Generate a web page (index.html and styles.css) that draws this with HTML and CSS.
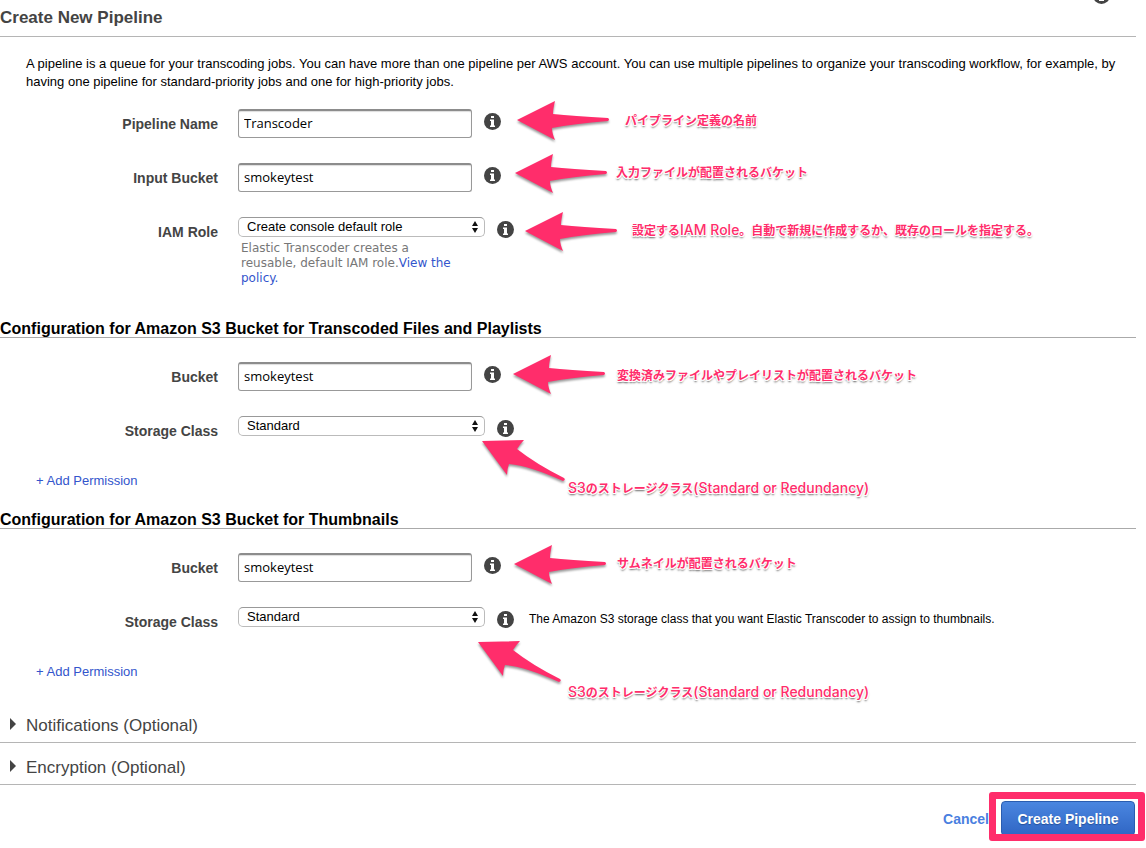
FILE: index.html
```
<!DOCTYPE html>
<html lang="en">
<head>
<meta charset="utf-8">
<title>Create New Pipeline</title>
<link rel="stylesheet" href="styles.css">
</head>
<body>
<svg class="defs" aria-hidden="true">
  <symbol id="info" viewBox="0 0 17 17">
    <circle cx="8.500" cy="8.500" r="8.500" fill="#444"/>
    <path fill="#fff" d="M7 3h3v2H7zM6 6.500h4v6h1v1.500H6v-1.500h1V8H6z"/>
  </symbol>
  <symbol id="updown" viewBox="0 0 6 12">
    <path fill="#111" d="M3 0l3 5H0zM3 12L0 7h6z"/>
  </symbol>
  <symbol id="arrow" viewBox="0 0 94 42">
    <path fill="#ff2d6b" d="M0 20L38 1Q36 9 36 14Q56 16 91 18Q93 19.500 91 21Q56 24 35 28Q35 33 38 40Z"/>
  </symbol>
  <symbol id="arrow-up" viewBox="0 0 84 42">
    <path fill="#ff2d6b" d="M0 1L42 0Q38 4 35 9Q54 24 82 38Q84 40 81 41Q48 26 27 24Q25 29 25 35Z"/>
  </symbol>
</svg>
<main class="page">
  <header class="page-head">
    <h1>Create New Pipeline</h1>
    <svg class="info head-info" role="img" aria-label="Info"><use href="#info"/></svg>
  </header>
  <p class="intro">A pipeline is a queue for your transcoding jobs. You can have more than one pipeline per AWS account. You can use multiple pipelines to organize your transcoding workflow, for example, by having one pipeline for standard-priority jobs and one for high-priority jobs.</p>

  <form>
    <div class="rows rows-main">
      <div class="row">
        <label for="name">Pipeline Name</label>
        <input class="text" id="name" type="text" value="Transcoder">
        <svg class="info" role="img" aria-label="Info"><use href="#info"/></svg>
      </div>
      <div class="row">
        <label for="input-bucket">Input Bucket</label>
        <input class="text" id="input-bucket" type="text" value="smokeytest">
        <svg class="info" role="img" aria-label="Info"><use href="#info"/></svg>
      </div>
      <div class="row">
        <label for="role">IAM Role</label>
        <div class="choice">
          <div class="select">
            <select id="role"><option>Create console default role</option></select>
            <svg class="updown" aria-hidden="true"><use href="#updown"/></svg>
          </div>
          <p class="help">Elastic Transcoder creates a reusable, default IAM role.<a href="#">View the policy.</a></p>
        </div>
        <svg class="info" role="img" aria-label="Info"><use href="#info"/></svg>
      </div>
    </div>

    <section class="config">
      <h2>Configuration for Amazon S3 Bucket for Transcoded Files and Playlists</h2>
      <div class="rows">
        <div class="row">
          <label for="files-bucket">Bucket</label>
          <input class="text" id="files-bucket" type="text" value="smokeytest">
          <svg class="info" role="img" aria-label="Info"><use href="#info"/></svg>
        </div>
        <div class="row">
          <label for="files-class">Storage Class</label>
          <div class="select">
            <select id="files-class"><option>Standard</option></select>
            <svg class="updown" aria-hidden="true"><use href="#updown"/></svg>
          </div>
          <svg class="info" role="img" aria-label="Info"><use href="#info"/></svg>
        </div>
      </div>
      <a class="add" href="#">+ Add Permission</a>
    </section>

    <section class="config">
      <h2>Configuration for Amazon S3 Bucket for Thumbnails</h2>
      <div class="rows">
        <div class="row">
          <label for="thumbs-bucket">Bucket</label>
          <input class="text" id="thumbs-bucket" type="text" value="smokeytest">
          <svg class="info" role="img" aria-label="Info"><use href="#info"/></svg>
        </div>
        <div class="row">
          <label for="thumbs-class">Storage Class</label>
          <div class="select">
            <select id="thumbs-class"><option>Standard</option></select>
            <svg class="updown" aria-hidden="true"><use href="#updown"/></svg>
          </div>
          <svg class="info" role="img" aria-label="Info"><use href="#info"/></svg>
          <p class="hint">The Amazon S3 storage class that you want Elastic Transcoder to assign to thumbnails.</p>
        </div>
      </div>
      <a class="add" href="#">+ Add Permission</a>
    </section>

    <details class="more">
      <summary><svg class="caret" viewBox="0 0 6 12" aria-hidden="true"><path fill="#444" d="M0 0l6 6-6 6z"/></svg>Notifications (Optional)</summary>
    </details>
    <details class="more">
      <summary><svg class="caret" viewBox="0 0 6 12" aria-hidden="true"><path fill="#444" d="M0 0l6 6-6 6z"/></svg>Encryption (Optional)</summary>
    </details>

    <footer class="actions">
      <a class="cancel" href="#">Cancel</a>
      <div class="marked"><button class="create" type="submit">Create Pipeline</button></div>
    </footer>
  </form>

  <div class="notes" lang="ja">
    <svg class="arrow a-name" aria-hidden="true"><use href="#arrow"/></svg>
    <span class="note n-name">パイプライン定義の名前</span>
    <svg class="arrow a-input" aria-hidden="true"><use href="#arrow"/></svg>
    <span class="note n-input">入力ファイルが配置されるバケット</span>
    <svg class="arrow a-role" aria-hidden="true"><use href="#arrow"/></svg>
    <span class="note n-role">設定する<span class="latin">IAM Role</span>。自動で新規に作成するか、既存のロールを指定する。</span>
    <svg class="arrow a-files" aria-hidden="true"><use href="#arrow"/></svg>
    <span class="note n-files">変換済みファイルやプレイリストが配置されるバケット</span>
    <svg class="arrow-up a-files-class" aria-hidden="true"><use href="#arrow-up"/></svg>
    <span class="note n-files-class"><span class="latin">S3</span>のストレージクラス<span class="latin">(Standard or Redundancy)</span></span>
    <svg class="arrow a-thumbs" aria-hidden="true"><use href="#arrow"/></svg>
    <span class="note n-thumbs">サムネイルが配置されるバケット</span>
    <svg class="arrow-up a-thumbs-class" aria-hidden="true"><use href="#arrow-up"/></svg>
    <span class="note n-thumbs-class"><span class="latin">S3</span>のストレージクラス<span class="latin">(Standard or Redundancy)</span></span>
  </div>
</main>
</body>
</html>
```
FILE: styles.css
```
* { box-sizing: border-box; }
body {
  margin: 0;
  background: #fff;
  color: #000;
  font: 13px/18px "Liberation Sans", Arial, sans-serif;
}
h1, h2, p { margin: 0; }
a { color: #3355cc; text-decoration: none; }
.defs { position: absolute; width: 0; height: 0; }
.page { position: relative; padding-right: 10px; overflow: clip; }

.page-head { position: relative; padding: 9px 0 9px; border-bottom: 1px solid #b5b5b5; }
.page-head h1 { color: #444; font-size: 17px; line-height: 18px; }
.info { flex: none; width: 17px; height: 17px; margin: 4px 0 0 12px; }
.head-info { position: absolute; top: -17px; right: 26px; }

.intro { padding: 18px 10px 0 26px; }

.rows { display: flex; flex-direction: column; gap: 25px; padding-top: 24px; }
.rows-main { padding: 18px 0 34px; }
.row { display: flex; align-items: flex-start; min-height: 29px; }
.row label {
  flex: none;
  width: 218px;
  margin-right: 20px;
  padding-top: 2px;
  color: #444;
  font-size: 14px;
  font-weight: bold;
  line-height: 27px;
  text-align: right;
}
.text {
  width: 234px;
  height: 29px;
  padding: 0 5px 2px;
  border: 1px solid #999;
  border-top: 2px solid #8c8c8c;
  border-radius: 3px;
  background: #fff;
  box-shadow: inset 0 1px 1px #ddd;
  color: #000;
  font: 13px "Open Sans", sans-serif;
}
.select { position: relative; width: 247px; height: 20px; }
.select select {
  appearance: none;
  display: block;
  width: 100%;
  height: 20px;
  padding: 0 20px 2px 8px;
  border: 1px solid #bbb;
  border-top-color: #999;
  border-radius: 5px;
  background: #fff;
  color: #000;
  font: 13px "Liberation Sans", Arial, sans-serif;
}
.updown { position: absolute; top: 4px; right: 7px; width: 6px; height: 12px; pointer-events: none; }
.choice { width: 247px; }
.help {
  padding: 4px 20px 0 3px;
  color: #777;
  font: 12px/15px "DejaVu Sans", Verdana, sans-serif;
}
.hint { padding: 3px 0 0 15px; font-size: 12px; }

.config h2 { padding-top: 1px; border-bottom: 1px solid #aaa; font-size: 16px; line-height: 17px; }
.rows-main { padding-bottom: 33px; }
.add { display: inline-block; margin: 27px 0 20px 36px; }

.more { border-bottom: 1px solid #b5b5b5; }
.more summary {
  display: flex;
  align-items: flex-start;
  gap: 10px;
  padding: 14px 0 5px 10px;
  color: #444;
  font-size: 17px;
  line-height: 22px;
  list-style: none;
}
.caret { width: 6px; height: 12px; margin-top: 3px; }

.actions { display: flex; justify-content: flex-end; align-items: center; gap: 12px; padding: 16px 1px 12px 0; }
.cancel { color: #4a7fe0; font-size: 14px; font-weight: bold; }
.marked { position: relative; }
.marked::after {
  content: "";
  position: absolute;
  inset: -9px -10px -5px -12px;
  border: 7px solid #ff2d6b;
  border-radius: 3px;
  pointer-events: none;
}
.create {
  display: block;
  width: 134px;
  height: 35px;
  padding: 0;
  border: 1px solid #2a5db0;
  border-radius: 4px;
  background: linear-gradient(#4a86e0, #3066c4);
  color: #fff;
  font: bold 14px "Liberation Sans", Arial, sans-serif;
  text-shadow: 0 1px 1px #24509c;
}

/* Callouts pinned over the form */
.notes { position: absolute; inset: 0; pointer-events: none; }
.arrow, .arrow-up { position: absolute; filter: drop-shadow(0 2px 1px rgba(0, 0, 0, .4)); }
.arrow { width: 94px; height: 42px; }
.arrow-up { width: 84px; height: 42px; }
.note {
  position: absolute;
  color: #ff2d6b;
  font: 600 12px/18px Inter, "Noto Sans CJK JP", sans-serif;
  white-space: nowrap;
  text-shadow: 1px 0 #fff, -1px 0 #fff, 0 1px #fff, 0 -1px #fff, 1px 1px #fff, -1px 1px #fff, 0 2px 2px rgba(0, 0, 0, .7);
}
.latin { font-size: 14px; font-weight: 500; }
.a-name { left: 517px; top: 100px; }
.n-name { left: 625px; top: 112px; }
.a-input { left: 515px; top: 153px; }
.n-input { left: 616px; top: 164px; }
.a-role { left: 525px; top: 211px; }
.n-role { left: 632px; top: 221px; }
.a-files { left: 513px; top: 354px; }
.n-files { left: 617px; top: 367px; }
.a-files-class { left: 482px; top: 440px; }
.n-files-class { left: 568px; top: 479px; }
.a-thumbs { left: 514px; top: 544px; }
.n-thumbs { left: 617px; top: 555px; }
.a-thumbs-class { left: 478px; top: 641px; }
.n-thumbs-class { left: 568px; top: 683px; }
```
